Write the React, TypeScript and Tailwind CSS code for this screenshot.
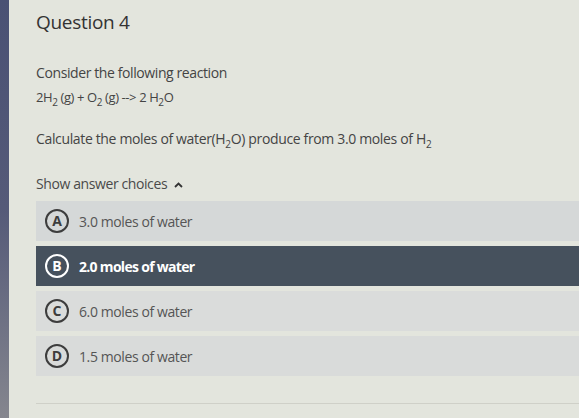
import React from "react";

const Sub = ({ children }: { children: React.ReactNode }) => (
  <sub className="text-[10px] relative top-[0px] align-sub leading-none">{children}</sub>
);

const options = [
  { letter: "A", text: "3.0 moles of water", selected: false, bg: "bg-[#d5d8d8]" },
  { letter: "B", text: "2.0 moles of water", selected: true, bg: "bg-[#46515d]" },
  { letter: "C", text: "6.0 moles of water", selected: false, bg: "bg-[#dadcdb]" },
  { letter: "D", text: "1.5 moles of water", selected: false, bg: "bg-[#d9dbda]" },
];

export default function App() {
  return (
    <div
      className="w-[579px] h-[418px] flex bg-[#e3e5dd] overflow-hidden"
      style={{ fontFamily: '"Open Sans", "Noto Sans", sans-serif' }}
    >
      <div className="w-[9px] shrink-0 bg-gradient-to-b from-[#4a5174] via-[#555a78] to-[#85868e]" />
      <div className="flex-1 flex flex-col pl-[27px] text-[#4a4a4a]">
        <h1 className="mt-[9px] text-[19px] leading-[26px] text-[#333] tracking-[-0.3px]">Question 4</h1>
        <p className="mt-[28px] text-[14px] leading-[20px] tracking-[-0.4px] text-[#444]">
          Consider the following reaction
        </p>
        <p className="mt-[4px] text-[13px] leading-[20px] tracking-[-0.4px] text-[#444]">
          2H<Sub>2</Sub> (g) + O<Sub>2</Sub> (g) --&gt; 2 H<Sub>2</Sub>O
        </p>
        <p className="mt-[22px] text-[14px] leading-[20px] tracking-[-0.35px] text-[#444]">
          Calculate the moles of water(H<Sub>2</Sub>O) produce from 3.0 moles of H<Sub>2</Sub>
        </p>
        <div className="mt-[25px] flex items-center gap-[7px] text-[14px] leading-[20px] tracking-[-0.4px] text-[#4a4a4a]">
          <span>Show answer choices</span>
          <svg width="9" height="6" viewBox="0 0 9 6" className="mt-[2px]">
            <path d="M1 5 L4.5 1.5 L8 5" stroke="#333" strokeWidth="1.8" fill="none" />
          </svg>
        </div>
        <div className="mt-[7px] flex flex-col gap-[5px]">
          {options.map((o) => (
            <div key={o.letter} className={`h-[40px] flex items-center pl-[9px] ${o.bg}`}>
              <div
                className={`w-[24px] h-[24px] rounded-full border-2 flex items-center justify-center text-[14px] font-bold leading-none ${
                  o.selected ? "border-white text-white" : "border-[#3d3d3d] text-[#3d3d3d]"
                }`}
              >
                {o.letter}
              </div>
              <span
                className={`ml-[10px] text-[14px] tracking-[-0.4px] ${
                  o.selected ? "text-white font-bold tracking-[-0.7px]" : "text-[#555]"
                }`}
              >
                {o.text}
              </span>
            </div>
          ))}
        </div>
        <div className="mt-[27px] h-px bg-[#cfd0c8]" />
      </div>
    </div>
  );
}
